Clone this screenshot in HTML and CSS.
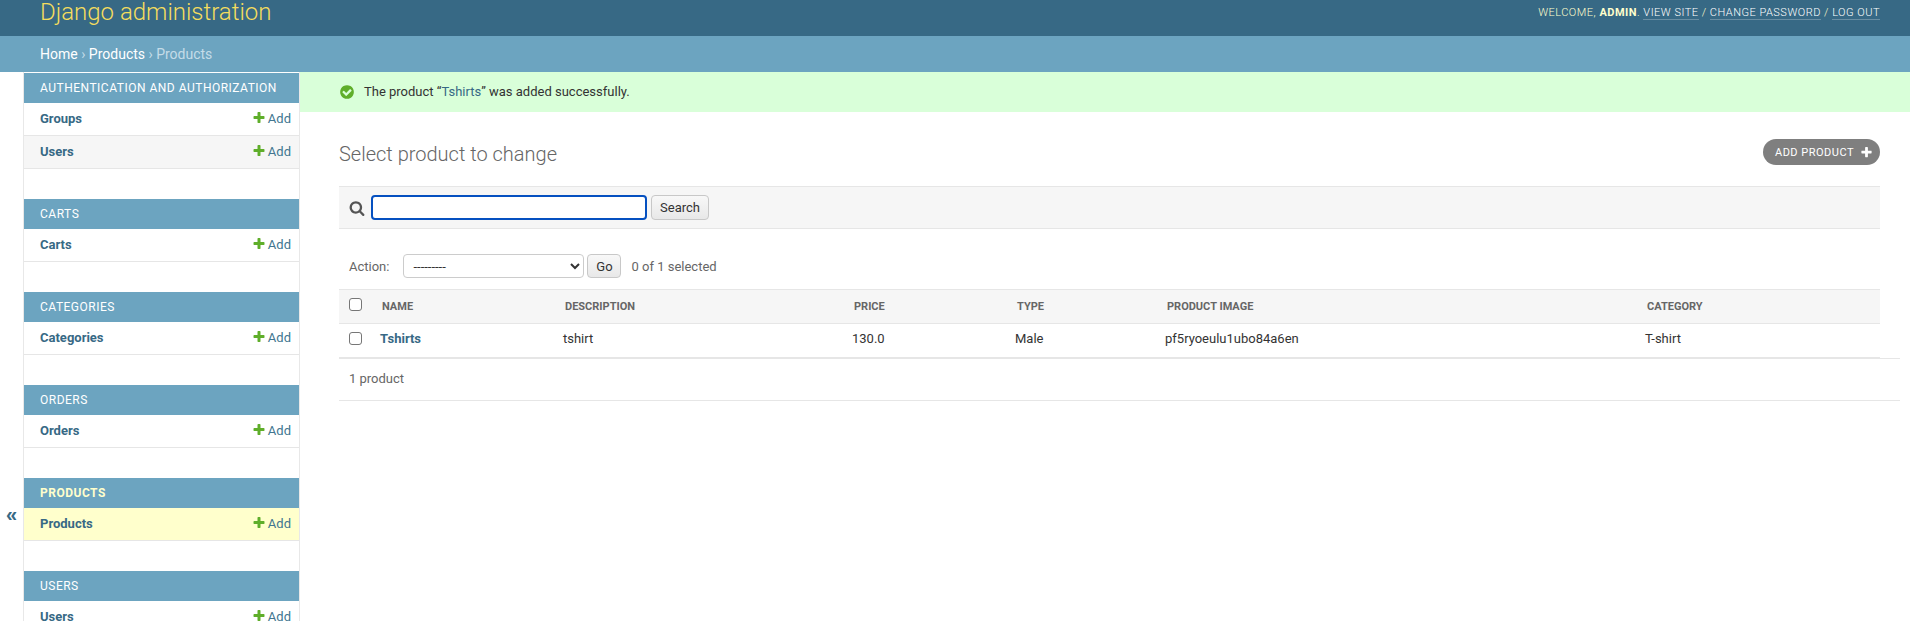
FILE: index.html
```html
<!DOCTYPE html>
<html lang="en">
<head>
    <meta charset="UTF-8">
    <title>Select product to change | Django site admin</title>
    <link rel="stylesheet" href="styles.css">
</head>
<body>
    <div class="header">
        <div class="branding">Django administration</div>
        <div class="user-tools">
            Welcome, <strong>admin</strong>.
            <a href="#">View site</a> /
            <a href="#">Change password</a> /
            <a href="#">Log out</a>
        </div>
    </div>
    <div class="breadcrumbs">
        <a href="#">Home</a> &rsaquo; <a href="#">Products</a> &rsaquo; Products
    </div>

    <div class="main">
        <button class="nav-toggle">&laquo;</button>
        <div class="sidebar">
            <div class="module">
                <div class="caption">Authentication and Authorization</div>
                <div class="nav-row"><a class="model" href="#">Groups</a><a class="add" href="#"><svg class="plus" viewBox="0 0 1792 1792"><path d="M1600 736v192q0 40-28 68t-68 28h-416v416q0 40-28 68t-68 28h-192q-40 0-68-28t-28-68v-416h-416q-40 0-68-28t-28-68v-192q0-40 28-68t68-28h416v-416q0-40 28-68t68-28h192q40 0 68 28t28 68v416h416q40 0 68 28t28 68z"/></svg>Add</a></div>
                <div class="nav-row alt"><a class="model" href="#">Users</a><a class="add" href="#"><svg class="plus" viewBox="0 0 1792 1792"><path d="M1600 736v192q0 40-28 68t-68 28h-416v416q0 40-28 68t-68 28h-192q-40 0-68-28t-28-68v-416h-416q-40 0-68-28t-28-68v-192q0-40 28-68t68-28h416v-416q0-40 28-68t68-28h192q40 0 68 28t28 68v416h416q40 0 68 28t28 68z"/></svg>Add</a></div>
            </div>
            <div class="module">
                <div class="caption">Carts</div>
                <div class="nav-row"><a class="model" href="#">Carts</a><a class="add" href="#"><svg class="plus" viewBox="0 0 1792 1792"><path d="M1600 736v192q0 40-28 68t-68 28h-416v416q0 40-28 68t-68 28h-192q-40 0-68-28t-28-68v-416h-416q-40 0-68-28t-28-68v-192q0-40 28-68t68-28h416v-416q0-40 28-68t68-28h192q40 0 68 28t28 68v416h416q40 0 68 28t28 68z"/></svg>Add</a></div>
            </div>
            <div class="module">
                <div class="caption">Categories</div>
                <div class="nav-row"><a class="model" href="#">Categories</a><a class="add" href="#"><svg class="plus" viewBox="0 0 1792 1792"><path d="M1600 736v192q0 40-28 68t-68 28h-416v416q0 40-28 68t-68 28h-192q-40 0-68-28t-28-68v-416h-416q-40 0-68-28t-28-68v-192q0-40 28-68t68-28h416v-416q0-40 28-68t68-28h192q40 0 68 28t28 68v416h416q40 0 68 28t28 68z"/></svg>Add</a></div>
            </div>
            <div class="module">
                <div class="caption">Orders</div>
                <div class="nav-row"><a class="model" href="#">Orders</a><a class="add" href="#"><svg class="plus" viewBox="0 0 1792 1792"><path d="M1600 736v192q0 40-28 68t-68 28h-416v416q0 40-28 68t-68 28h-192q-40 0-68-28t-28-68v-416h-416q-40 0-68-28t-28-68v-192q0-40 28-68t68-28h416v-416q0-40 28-68t68-28h192q40 0 68 28t28 68v416h416q40 0 68 28t28 68z"/></svg>Add</a></div>
            </div>
            <div class="module">
                <div class="caption current">Products</div>
                <div class="nav-row selected"><a class="model" href="#">Products</a><a class="add" href="#"><svg class="plus" viewBox="0 0 1792 1792"><path d="M1600 736v192q0 40-28 68t-68 28h-416v416q0 40-28 68t-68 28h-192q-40 0-68-28t-28-68v-416h-416q-40 0-68-28t-28-68v-192q0-40 28-68t68-28h416v-416q0-40 28-68t68-28h192q40 0 68 28t28 68v416h416q40 0 68 28t28 68z"/></svg>Add</a></div>
            </div>
            <div class="module">
                <div class="caption">Users</div>
                <div class="nav-row"><a class="model" href="#">Users</a><a class="add" href="#"><svg class="plus" viewBox="0 0 1792 1792"><path d="M1600 736v192q0 40-28 68t-68 28h-416v416q0 40-28 68t-68 28h-192q-40 0-68-28t-28-68v-416h-416q-40 0-68-28t-28-68v-192q0-40 28-68t68-28h416v-416q0-40 28-68t68-28h192q40 0 68 28t28 68v416h416q40 0 68 28t28 68z"/></svg>Add</a></div>
            </div>
        </div>

        <div class="main-content">
            <div class="messagelist">
                <svg class="msg-icon" viewBox="0 0 1792 1792"><path fill="#5fae2a" d="M1412 734q0-28-18-46l-91-90q-19-19-45-19t-45 19l-408 407-226-226q-19-19-45-19t-45 19l-91 90q-18 18-18 46 0 27 18 45l362 362q19 19 45 19 27 0 46-19l543-543q18-18 18-45zm252 162q0 209-103 385.500t-279.500 279.500-385.500 103-385.500-103-279.500-279.500-103-385.500 103-385.500 279.500-279.500 385.500-103 385.500 103 279.500 279.500 103 385.500z"/></svg>
                <span>The product &ldquo;<a href="#">Tshirts</a>&rdquo; was added successfully.</span>
            </div>

            <div class="content">
                <div class="title-row">
                    <h1>Select product to change</h1>
                    <a class="addlink" href="#">Add product<svg class="addlink-icon" viewBox="0 0 1792 1792"><path fill="#fff" d="M1600 736v192q0 40-28 68t-68 28h-416v416q0 40-28 68t-68 28h-192q-40 0-68-28t-28-68v-416h-416q-40 0-68-28t-28-68v-192q0-40 28-68t68-28h416v-416q0-40 28-68t68-28h192q40 0 68 28t28 68v416h416q40 0 68 28t28 68z"/></svg></a>
                </div>

                <div class="toolbar">
                    <svg class="search-icon" viewBox="0 0 1792 1792"><path fill="#555" d="M1216 832q0-185-131.500-316.500t-316.500-131.500-316.500 131.500-131.500 316.500 131.500 316.500 316.500 131.500 316.500-131.500 131.500-316.500zm512 832q0 52-38 90t-90 38q-54 0-90-38l-343-342q-179 124-399 124-143 0-273.500-55.500t-225-150-150-225-55.500-273.500 55.500-273.500 150-225 225-150 273.500-55.500 273.500 55.500 225 150 150 225 55.500 273.500q0 220-124 399l343 343q37 37 37 90z"/></svg>
                    <input class="search-input" type="text">
                    <button class="btn search-btn">Search</button>
                </div>

                <div class="actions">
                    <span class="action-label">Action:</span>
                    <select class="action-select"><option>---------</option></select>
                    <button class="btn go-btn">Go</button>
                    <span class="action-counter">0 of 1 selected</span>
                </div>

                <table class="results">
                    <thead>
                        <tr>
                            <th class="col-check"><span class="check"></span></th>
                            <th class="col-name">Name</th>
                            <th class="col-desc">Description</th>
                            <th class="col-price">Price</th>
                            <th class="col-type">Type</th>
                            <th class="col-image">Product image</th>
                            <th class="col-cat">Category</th>
                        </tr>
                    </thead>
                    <tbody>
                        <tr>
                            <td class="col-check"><span class="check"></span></td>
                            <td class="col-name"><a href="#">Tshirts</a></td>
                            <td>tshirt</td>
                            <td>130.0</td>
                            <td>Male</td>
                            <td>pf5ryoeulu1ubo84a6en</td>
                            <td>T-shirt</td>
                        </tr>
                    </tbody>
                </table>
                <div class="paginator">1 product</div>
            </div>
        </div>
    </div>
</body>
</html>
```

FILE: styles.css
```css
* {
    box-sizing: border-box;
}
html, body {
    height: 100%;
}
body {
    margin: 0;
    font-family: Roboto, "Liberation Sans", sans-serif;
    font-size: 14px;
    color: #333;
    background: #fff;
    overflow: hidden;
}
a {
    color: #376985;
    text-decoration: none;
}

.header {
    display: flex;
    justify-content: space-between;
    height: 36px;
    padding: 0 30px 0 40px;
    background: #376985;
    color: #ffc;
    overflow: hidden;
}
.branding {
    font-size: 24px;
    font-weight: 300;
    line-height: 24px;
    color: #f5dd5d;
}
.user-tools {
    font-size: 11px;
    font-weight: 300;
    line-height: 25px;
    letter-spacing: 0.5px;
    text-transform: uppercase;
}
.user-tools strong {
    font-weight: 700;
}
.user-tools a {
    color: #fff;
    border-bottom: 1px solid rgba(255, 255, 255, 0.25);
}

.breadcrumbs {
    height: 36px;
    padding: 0 40px;
    background: #6ca4c0;
    color: #c4dce8;
    font-size: 14px;
    line-height: 36px;
}
.breadcrumbs a {
    color: #fff;
}

.main {
    display: flex;
    height: calc(100% - 72px);
    overflow: hidden;
}
.nav-toggle {
    flex: 0 0 23px;
    align-self: flex-start;
    padding: 432px 0 0;
    border: 0;
    background: #fff;
    color: #376985;
    font-size: 20px;
    font-weight: 700;
    line-height: 20px;
}
.sidebar {
    flex: 0 0 277px;
    padding-top: 1px;
    border-left: 1px solid #e8e8e8;
    border-right: 1px solid #e8e8e8;
}
.module {
    margin-bottom: 30px;
}
.caption {
    height: 30px;
    padding: 0 16px;
    background: #6ca4c0;
    color: #fff;
    font-size: 12px;
    line-height: 30px;
    letter-spacing: 0.5px;
    text-transform: uppercase;
    white-space: nowrap;
}
.caption.current {
    color: #ffc;
    font-weight: 700;
}
.nav-row {
    display: flex;
    justify-content: space-between;
    align-items: center;
    height: 33px;
    padding: 0 8px 2px 16px;
    border-bottom: 1px solid #e6e6e6;
}
.nav-row.alt {
    background: #f6f6f6;
}
.nav-row.selected {
    background: #ffc;
}
.model {
    font-size: 13px;
    font-weight: 700;
}
.add {
    display: flex;
    align-items: center;
    font-size: 13px;
    color: #417690;
}
.plus {
    width: 14px;
    height: 14px;
    margin-right: 2px;
    fill: #5fae2a;
}

.main-content {
    flex: 1;
    min-width: 0;
}
.messagelist {
    display: flex;
    align-items: center;
    height: 40px;
    padding: 0 0 1px 39px;
    background: #d9ffd9;
    font-size: 13px;
}
.msg-icon {
    width: 16px;
    height: 16px;
    margin-right: 9px;
}
.content {
    padding: 27px 30px 0 39px;
}
.title-row {
    display: flex;
    justify-content: space-between;
    align-items: center;
    height: 30px;
    margin-bottom: 17px;
}
h1 {
    margin: 0;
    font-size: 20px;
    font-weight: 300;
    color: #666;
}
.addlink {
    display: flex;
    align-items: center;
    align-self: flex-start;
    height: 26px;
    padding: 0 7px 0 12px;
    border-radius: 15px;
    background: #7f7f7f;
    color: #fff;
    font-size: 11px;
    letter-spacing: 0.5px;
    text-transform: uppercase;
}
.addlink-icon {
    width: 13px;
    height: 13px;
    margin-left: 6px;
}

.toolbar {
    display: flex;
    align-items: center;
    height: 43px;
    padding: 0 10px;
    background: #f6f6f6;
    border-top: 1px solid #e6e6e6;
    border-bottom: 1px solid #e6e6e6;
}
.search-icon {
    width: 16px;
    height: 16px;
    margin-right: 6px;
}
.search-input {
    width: 276px;
    height: 25px;
    padding: 2px 5px;
    border: 2px solid #0550c0;
    border-radius: 4px;
    background: #fff;
}
.btn {
    padding: 0;
    border: 1px solid #c8c8c8;
    border-radius: 4px;
    background: linear-gradient(#f8f8f8, #e8e8e8);
    color: #333;
    font-family: Roboto, sans-serif;
    font-size: 13px;
}
.search-btn {
    width: 58px;
    height: 25px;
    margin-left: 4px;
}

.actions {
    display: flex;
    align-items: center;
    height: 60px;
    padding: 14px 10px 0;
    font-size: 13px;
    color: #666;
}
.action-label {
    margin-right: 14px;
}
.action-select {
    width: 181px;
    height: 24px;
    margin-right: 3px;
    padding: 0 5px;
    border: 1px solid #ccc;
    border-radius: 4px;
    background: #fff;
    color: #333;
    font-family: Roboto, sans-serif;
    font-size: 13px;
}
.go-btn {
    width: 34px;
    height: 24px;
    margin-right: 10px;
}

.results {
    width: 100%;
    table-layout: fixed;
    border-collapse: collapse;
    font-size: 13px;
}
.results th {
    height: 34px;
    padding: 0 0 0 2px;
    background: #f6f6f6;
    border-top: 1px solid #e6e6e6;
    border-bottom: 1px solid #e6e6e6;
    color: #666;
    font-size: 11px;
    font-weight: 700;
    text-align: left;
    text-transform: uppercase;
}
.results td {
    height: 34px;
    padding: 0 0 5px;
    border-bottom: 1px solid #e6e6e6;
}
.results td a {
    font-weight: 700;
}
.col-check {
    width: 41px;
}
.results .col-check {
    padding-left: 10px;
}
.results th.col-check {
    padding-bottom: 4px;
}
.col-name {
    width: 183px;
}
.col-desc {
    width: 289px;
}
.col-price {
    width: 163px;
}
.col-type {
    width: 150px;
}
.col-image {
    width: 480px;
}
.check {
    display: block;
    width: 13px;
    height: 13px;
    border: 1px solid #767676;
    border-radius: 3px;
    background: #fff;
}
.paginator {
    width: 1561px;
    height: 43px;
    border-top: 1px solid #e6e6e6;
    border-bottom: 1px solid #e6e6e6;
    padding-left: 10px;
    color: #666;
    font-size: 13px;
    line-height: 40px;
}
```
